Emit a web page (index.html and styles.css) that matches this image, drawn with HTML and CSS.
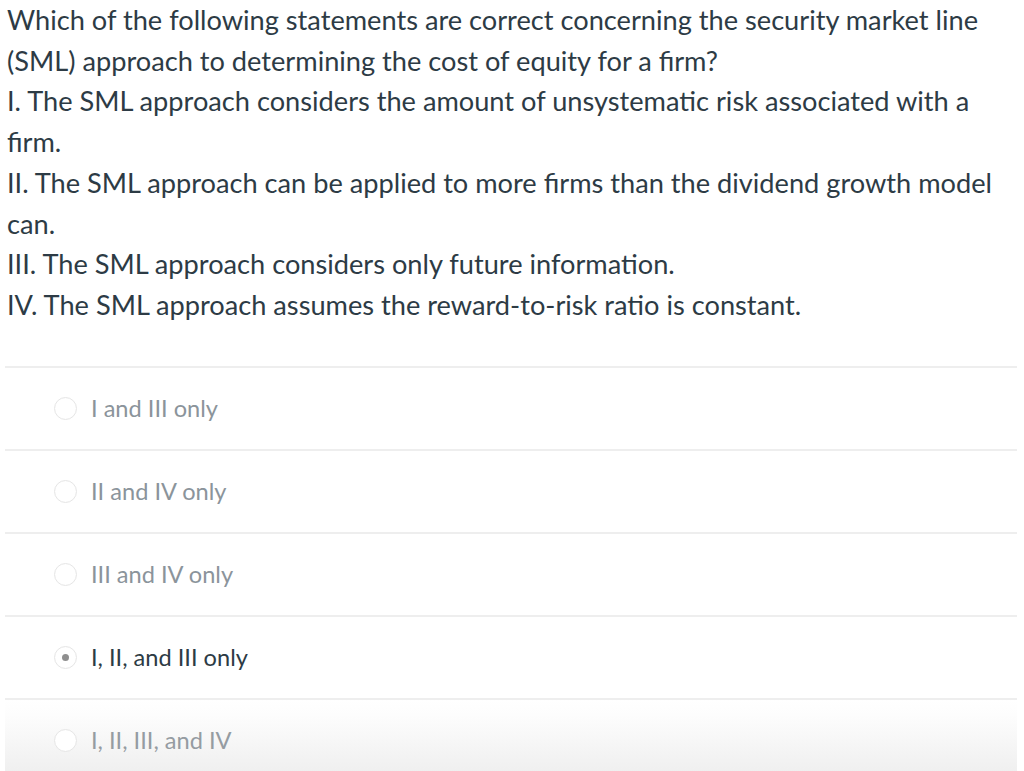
FILE: index.html
```html
<!DOCTYPE html>
<html>
<head>
<meta charset="utf-8">
<link rel="stylesheet" href="styles.css">
</head>
<body>
<div class="question">
  <div class="text">
    <p>Which of the following statements are correct concerning the security market line (SML) approach to determining the cost of equity for a firm?</p>
    <p>I. The SML approach considers the amount of unsystematic risk associated with a firm.</p>
    <p>II. The SML approach can be applied to more firms than the dividend growth model can.</p>
    <p>III. The SML approach considers only future information.</p>
    <p>IV. The SML approach assumes the reward-to-risk ratio is constant.</p>
  </div>
  <div class="answers">
    <div class="answer"><span class="radio"></span><span class="label">I and III only</span></div>
    <div class="answer"><span class="radio"></span><span class="label">II and IV only</span></div>
    <div class="answer"><span class="radio"></span><span class="label">III and IV only</span></div>
    <div class="answer selected"><span class="radio"></span><span class="label">I, II, and III only</span></div>
    <div class="answer last"><span class="radio"></span><span class="label">I, II, III, and IV</span></div>
  </div>
</div>
</body>
</html>
```
FILE: styles.css
```css
html {
  overflow: hidden;
}
html, body {
  margin: 0;
  padding: 0;
  background: #fff;
}
body {
  font-family: Lato, "Open Sans", sans-serif;
  color: #2d3b45;
}
.question {
  width: 1012px;
  padding-left: 5px;
}
.text {
  padding-left: 2px;
  font-size: 27.2px;
  line-height: 40.7px;
  padding-bottom: 40px;
}
.text p {
  margin: 0;
}
.answers {
  display: flex;
  flex-direction: column;
}
.answer {
  border-top: 2px solid #eeeeee;
  height: 81px;
  display: flex;
  align-items: center;
  padding-left: 49px;
  gap: 14px;
}
.answer.last {
  background: linear-gradient(#ffffff, #fdfdfd 15px, #efefef 73px);
}
.radio {
  width: 21px;
  height: 21px;
  border-radius: 50%;
  border: 1px solid #e6e6e6;
  box-shadow: inset 0 0 1px rgba(0,0,0,0.04);
  background: #fff;
  position: relative;
  flex: none;
}
.selected .radio::after {
  content: "";
  position: absolute;
  left: 7px;
  top: 7px;
  width: 7px;
  height: 7px;
  border-radius: 50%;
  background: #8f8f8f;
}
.label {
  font-size: 23.6px;
  color: #8b949b;
}
.selected .label {
  color: #2d3b45;
}
.last .label {
  color: #959ca2;
}
```
